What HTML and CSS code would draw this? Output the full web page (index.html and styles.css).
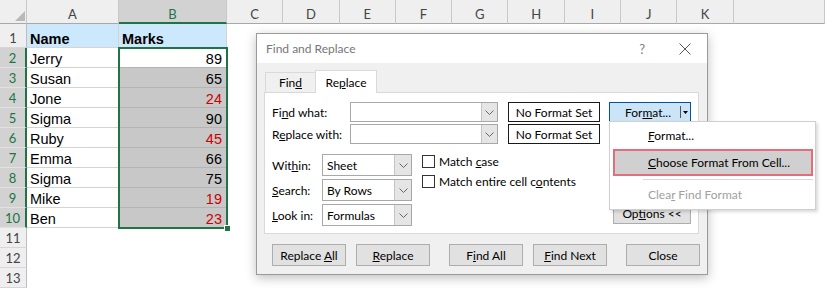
FILE: index.html
```html
<!DOCTYPE html>
<html lang="en">
<head>
    <meta charset="UTF-8">
    <meta name="viewport" content="width=device-width, initial-scale=1.0">
    <title>Find and Replace</title>
    <link rel="stylesheet" href="styles.css">
</head>
<body>
    <div class="sheet">
        <div class="corner">
            <svg width="10" height="10" viewBox="0 0 10 10"><polygon points="10,0 10,10 0,10" fill="#b9b9b9"/></svg>
        </div>
        <div class="col-head">A</div>
        <div class="col-head selected">B</div>
        <div class="col-head">C</div>
        <div class="col-head">D</div>
        <div class="col-head">E</div>
        <div class="col-head">F</div>
        <div class="col-head">G</div>
        <div class="col-head">H</div>
        <div class="col-head">I</div>
        <div class="col-head">J</div>
        <div class="col-head">K</div>
        <div class="col-head"></div>

        <div class="row-head">1</div>
        <div class="cell heading">Name</div>
        <div class="cell heading">Marks</div>
        <div class="rest"></div>

        <div class="row-head selected">2</div>
        <div class="cell">Jerry</div>
        <div class="cell mark active">89</div>
        <div class="rest"></div>

        <div class="row-head selected">3</div>
        <div class="cell">Susan</div>
        <div class="cell mark">65</div>
        <div class="rest"></div>

        <div class="row-head selected">4</div>
        <div class="cell">Jone</div>
        <div class="cell mark low">24</div>
        <div class="rest"></div>

        <div class="row-head selected">5</div>
        <div class="cell">Sigma</div>
        <div class="cell mark">90</div>
        <div class="rest"></div>

        <div class="row-head selected">6</div>
        <div class="cell">Ruby</div>
        <div class="cell mark low">45</div>
        <div class="rest"></div>

        <div class="row-head selected">7</div>
        <div class="cell">Emma</div>
        <div class="cell mark">66</div>
        <div class="rest"></div>

        <div class="row-head selected">8</div>
        <div class="cell">Sigma</div>
        <div class="cell mark">75</div>
        <div class="rest"></div>

        <div class="row-head selected">9</div>
        <div class="cell">Mike</div>
        <div class="cell mark low">19</div>
        <div class="rest"></div>

        <div class="row-head selected">10</div>
        <div class="cell">Ben</div>
        <div class="cell mark low">23</div>
        <div class="rest"></div>

        <div class="row-head">11</div>
        <div class="cell blank"></div>
        <div class="cell blank"></div>
        <div class="rest"></div>

        <div class="row-head">12</div>
        <div class="cell blank"></div>
        <div class="cell blank"></div>
        <div class="rest"></div>

        <div class="row-head">13</div>
        <div class="cell blank"></div>
        <div class="cell blank"></div>
        <div class="rest"></div>

        <div class="selection"><span class="handle"></span></div>
    </div>

    <div class="dialog">
        <div class="dialog-title">
            <span class="caption">Find and Replace</span>
            <span class="help">?</span>
            <svg class="close-x" width="12" height="12" viewBox="0 0 12 12">
                <path d="M0.5 0.5 L11.5 11.5 M11.5 0.5 L0.5 11.5" stroke="#555" stroke-width="1" fill="none"/>
            </svg>
        </div>

        <div class="dialog-body">
            <div class="tabs">
                <div class="tab"><span>Fin<u>d</u></span></div>
                <div class="tab active"><span>Re<u>p</u>lace</span></div>
            </div>

            <div class="panel">
                <div class="field-row">
                    <span class="field-label">Fi<u>n</u>d what:</span>
                    <div class="combo">
                        <span class="drop-btn">
                            <svg width="9" height="5" viewBox="0 0 9 5"><path d="M0.5 0.5 L4.5 4.5 L8.5 0.5" fill="none" stroke="#666"/></svg>
                        </span>
                    </div>
                    <div class="format-set">No Format Set</div>
                    <div class="split-btn">
                        <span class="split-main"><span>For<u>m</u>at...</span></span>
                        <span class="split-arrow">
                            <svg width="5" height="3" viewBox="0 0 5 3"><polygon points="0,0 5,0 2.5,3" fill="#000"/></svg>
                        </span>
                    </div>
                </div>

                <div class="field-row">
                    <span class="field-label">R<u>e</u>place with:</span>
                    <div class="combo">
                        <span class="drop-btn">
                            <svg width="9" height="5" viewBox="0 0 9 5"><path d="M0.5 0.5 L4.5 4.5 L8.5 0.5" fill="none" stroke="#666"/></svg>
                        </span>
                    </div>
                    <div class="format-set">No Format Set</div>
                </div>

                <div class="options">
                    <div class="option-selects">
                        <div class="select-row">
                            <span class="select-label">Wit<u>h</u>in:</span>
                            <div class="select">
                                <span class="select-text">Sheet</span>
                                <span class="drop-btn">
                                    <svg width="9" height="5" viewBox="0 0 9 5"><path d="M0.5 0.5 L4.5 4.5 L8.5 0.5" fill="none" stroke="#666"/></svg>
                                </span>
                            </div>
                        </div>
                        <div class="select-row">
                            <span class="select-label"><u>S</u>earch:</span>
                            <div class="select">
                                <span class="select-text">By Rows</span>
                                <span class="drop-btn">
                                    <svg width="9" height="5" viewBox="0 0 9 5"><path d="M0.5 0.5 L4.5 4.5 L8.5 0.5" fill="none" stroke="#666"/></svg>
                                </span>
                            </div>
                        </div>
                        <div class="select-row">
                            <span class="select-label"><u>L</u>ook in:</span>
                            <div class="select">
                                <span class="select-text">Formulas</span>
                                <span class="drop-btn">
                                    <svg width="9" height="5" viewBox="0 0 9 5"><path d="M0.5 0.5 L4.5 4.5 L8.5 0.5" fill="none" stroke="#666"/></svg>
                                </span>
                            </div>
                        </div>
                    </div>

                    <div class="checks">
                        <div class="check"><span class="box"></span><span>Match <u>c</u>ase</span></div>
                        <div class="check"><span class="box"></span><span>Match entire cell c<u>o</u>ntents</span></div>
                    </div>

                    <div class="btn options-btn"><span>Op<u>t</u>ions &lt;&lt;</span></div>
                </div>
            </div>

            <div class="actions">
                <div class="btn"><span>Replace <u>A</u>ll</span></div>
                <div class="btn"><span><u>R</u>eplace</span></div>
                <div class="btn spaced"><span>F<u>i</u>nd All</span></div>
                <div class="btn"><span><u>F</u>ind Next</span></div>
                <div class="btn spaced"><span>Close</span></div>
            </div>
        </div>

        <div class="menu">
            <div class="menu-item"><span><u>F</u>ormat...</span></div>
            <div class="menu-item picked"><span><u>C</u>hoose Format From Cell...</span></div>
            <div class="menu-sep"></div>
            <div class="menu-item disabled"><span>Clea<u>r</u> Find Format</span></div>
        </div>
    </div>
</body>
</html>
```

FILE: styles.css
```css
* {
    box-sizing: border-box;
}

body {
    margin: 0;
    background-color: #fff;
    font-family: "Liberation Sans", Arial, sans-serif;
    overflow: hidden;
}

/* spreadsheet */

.sheet {
    position: relative;
    display: grid;
    grid-template-columns: 27px 92px 108px repeat(9, 56.3px) 1fr;
    grid-template-rows: 24px 24px repeat(12, 20px);
    width: 825px;
    height: 288px;
}

.corner {
    background-color: #efefef;
    border-right: 1px solid #c8c8c8;
    border-bottom: 1px solid #a8a8a8;
    display: flex;
    align-items: flex-end;
    justify-content: flex-end;
    padding: 0 1px 2px 0;
}

.col-head {
    background-color: #efefef;
    border-right: 1px solid #c8c8c8;
    border-bottom: 1px solid #a8a8a8;
    font: 13px Lato, sans-serif;
    color: #444;
    display: flex;
    align-items: center;
    justify-content: center;
    padding-top: 5px;
}

.col-head.selected {
    background-color: #d2d2d2;
    color: #217346;
    border-bottom: 2px solid #217346;
}

.row-head {
    background-color: #efefef;
    border-right: 1px solid #bdbdbd;
    border-bottom: 1px solid #d6d6d6;
    font: 13px Lato, sans-serif;
    color: #444;
    display: flex;
    align-items: flex-end;
    justify-content: center;
    line-height: 17px;
    padding-bottom: 0;
}

.row-head.selected {
    background-color: #d2d2d2;
    color: #217346;
    border-right: 2px solid #217346;
    border-bottom-color: #e2e2e2;
}

.cell {
    display: flex;
    align-items: flex-end;
    padding: 0 3px;
    line-height: 16px;
    font-size: 14.5px;
    color: #000;
    border-right: 1px solid #d4d4d4;
    border-bottom: 1px solid #d4d4d4;
}

.cell.heading {
    background-color: #cce8fc;
    font-weight: bold;
}

.cell.mark {
    justify-content: flex-end;
    padding-right: 4px;
    background-color: #c8c8c8;
    border-bottom-color: #b4b4b4;
}

.cell.mark.active {
    background-color: #fff;
}

.cell.low {
    color: #cc0000;
}

.cell.blank {
    border: 0;
}

.rest {
    grid-column: span 10;
}

.selection {
    position: absolute;
    left: 118px;
    top: 47px;
    width: 110px;
    height: 182px;
    border: 2px solid #217346;
}

.selection .handle {
    position: absolute;
    right: -5px;
    bottom: -5px;
    width: 7px;
    height: 7px;
    background-color: #217346;
    border: 1px solid #fff;
}

/* dialog */

.dialog {
    position: absolute;
    left: 256px;
    top: 33px;
    width: 452px;
    height: 242px;
    border: 1px solid #9a9a9a;
    background-color: #f0f0f0;
    box-shadow: 0 3px 10px rgba(0, 0, 0, 0.25);
    font: 12px Lato, sans-serif;
    color: #000;
}

.dialog-title {
    height: 29px;
    background-color: #fff;
    display: flex;
    align-items: center;
    padding: 0 16px 0 9px;
    color: #767676;
}

.dialog-title .caption {
    flex: 1;
}

.dialog-title .help {
    font-size: 13px;
    color: #808080;
    margin-right: 34px;
}

.dialog-body {
    padding: 7px 8px 8px 7px;
}

.tabs {
    display: flex;
    align-items: flex-end;
    height: 22px;
    margin-left: 1px;
}

.tab {
    width: 50px;
    height: 20px;
    border: 1px solid #d9d9d9;
    border-bottom: 0;
    border-right: 0;
    display: flex;
    align-items: center;
    justify-content: center;
}

.tab.active {
    width: 62px;
    height: 23px;
    margin-bottom: -1px;
    background-color: #fff;
    border-right: 1px solid #d9d9d9;
    position: relative;
    z-index: 1;
}

.panel {
    height: 142px;
    background-color: #fff;
    border: 1px solid #d9d9d9;
    padding: 9px 7px 0 7px;
}

.field-row {
    display: flex;
    align-items: center;
    height: 20px;
    margin-bottom: 2px;
}

.field-label {
    width: 78px;
}

.combo {
    width: 148px;
    height: 20px;
    border: 1px solid #a8a8a8;
    display: flex;
    justify-content: flex-end;
    background-color: #fff;
}

.drop-btn {
    width: 16px;
    height: 100%;
    background-color: #e5e5e5;
    border-left: 1px solid #c4c4c4;
    display: flex;
    align-items: center;
    justify-content: center;
}

.format-set {
    width: 92px;
    height: 20px;
    margin-left: 10px;
    border: 1px solid #1a1a1a;
    display: flex;
    align-items: center;
    justify-content: center;
}

.split-btn {
    width: 82px;
    height: 20px;
    margin-left: 9px;
    background-color: #cce4f7;
    border: 1px solid #005499;
    display: flex;
}

.split-main {
    flex: 1;
    display: flex;
    align-items: center;
    justify-content: center;
    padding-left: 6px;
}

.split-arrow {
    width: 10px;
    margin: 3px 0;
    border-left: 1px solid #555;
    display: flex;
    align-items: center;
    justify-content: center;
}

.options {
    display: flex;
    margin-top: 10px;
}

.option-selects {
    display: flex;
    flex-direction: column;
    gap: 3px;
}

.select-row {
    display: flex;
    align-items: center;
    height: 22px;
}

.select-label {
    width: 50px;
}

.select {
    width: 90px;
    height: 22px;
    border: 1px solid #a8a8a8;
    display: flex;
}

.select-text {
    flex: 1;
    padding-left: 4px;
    display: flex;
    align-items: center;
}

.select .drop-btn {
    width: 17px;
}

.checks {
    margin-left: 10px;
    padding-top: 1px;
    display: flex;
    flex-direction: column;
    gap: 7px;
}

.check {
    display: flex;
    align-items: center;
    gap: 4px;
    height: 13px;
}

.check .box {
    width: 13px;
    height: 13px;
    border: 1px solid #333;
    background-color: #fff;
}

.btn {
    width: 74px;
    height: 22px;
    flex-shrink: 0;
    background-color: #e1e1e1;
    border: 1px solid #adadad;
    display: flex;
    align-items: center;
    justify-content: center;
}

.options-btn {
    width: 78px;
    height: 21px;
    margin-left: auto;
    margin-bottom: 2px;
    align-self: flex-end;
}

.actions {
    display: flex;
    gap: 10px;
    margin-top: 10px;
    padding-left: 8px;
}

.actions .spaced {
    margin-left: 9px;
}

/* format dropdown */

.menu {
    position: absolute;
    left: 352px;
    top: 87px;
    width: 207px;
    height: 89px;
    background-color: #fff;
    border: 1px solid #cfcfcf;
    box-shadow: 2px 2px 3px rgba(0, 0, 0, 0.15);
    z-index: 2;
}

.menu-item {
    height: 27px;
    display: flex;
    align-items: center;
    padding-left: 38px;
}

.menu-item.picked {
    margin: 0 2px 0 3px;
    padding-left: 33px;
    background-color: #d0d0d0;
    border: 2px solid #e66b7b;
}

.menu-sep {
    height: 1px;
    margin: 3px 2px 0 33px;
    background-color: #d7d7d7;
}

.menu-item.disabled {
    height: 28px;
    color: #a0a0a0;
}
```
